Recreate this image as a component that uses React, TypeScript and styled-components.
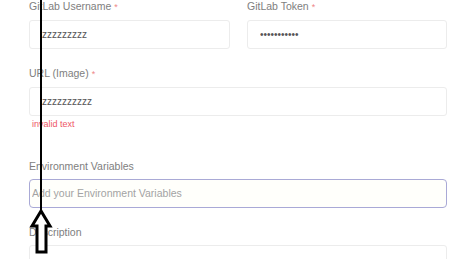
import React from "react";
import styled, { createGlobalStyle } from "styled-components";

const Global = createGlobalStyle`
  html, body { margin: 0; padding: 0; background: #ffffff; }
  body { font-family: "Liberation Sans", Arial, sans-serif; overflow: hidden; }
  * { box-sizing: border-box; }
`;

const Page = styled.div`
  position: relative;
  width: 474px;
  height: 259px;
  overflow: hidden;
  background: #fff;
`;

const Form = styled.form`
  display: flex;
  flex-direction: column;
  gap: 18px;
  padding: 0 27px 0 29px;
`;

const Row = styled.div`
  display: grid;
  grid-template-columns: 201px 200px;
  column-gap: 17px;
`;

const Field = styled.div<{ $extra?: number }>`
  display: flex;
  flex-direction: column;
  padding-bottom: ${(p) => p.$extra ?? 0}px;
`;

const Label = styled.label`
  font-size: 10.5px;
  line-height: 13px;
  color: #7e7e7e;
  margin-bottom: 6px;
  white-space: nowrap;
`;

const Req = styled.span`
  color: #e88;
  font-size: 9px;
  margin-left: 3px;
`;

const Input = styled.input<{ $focus?: boolean }>`
  height: 29px;
  width: 100%;
  border: 1px solid ${(p) => (p.$focus ? "#a9a9d6" : "#ececec")};
  border-radius: ${(p) => (p.$focus ? 4 : 3)}px;
  background: ${(p) => (p.$focus ? "#fffffb" : "#fff")};
  padding: 0 0 0 ${(p) => (p.$focus ? 2 : 12)}px;
  font-family: "Liberation Sans", Arial, sans-serif;
  font-size: 10px;
  color: #555;
  outline: none;
  &::placeholder { color: #a3a3a3; font-size: 10.5px; }
`;

const ErrorText = styled.div`
  font-size: 9px;
  line-height: 12px;
  color: #ee5566;
  margin-top: 2px;
  padding-left: 3px;
`;

const Overlay = styled.svg`
  position: absolute;
  left: 0;
  top: 0;
  pointer-events: none;
`;

export default function App() {
  return (
    <Page>
      <Global />
      <Form onSubmit={(e) => e.preventDefault()}>
        <Row>
          <Field>
            <Label>GitLab Username<Req>*</Req></Label>
            <Input defaultValue="zzzzzzzzz" />
          </Field>
          <Field>
            <Label>GitLab Token<Req>*</Req></Label>
            <Input type="password" defaultValue="aaaaaaaaaaa" />
          </Field>
        </Row>
        <Field $extra={12}>
          <Label>URL (Image)<Req>*</Req></Label>
          <Input defaultValue="zzzzzzzzzz" />
          <ErrorText>invalid text</ErrorText>
        </Field>
        <Field>
          <Label>Environment Variables</Label>
          <Input $focus placeholder="Add your Environment Variables" />
        </Field>
        <Field>
          <Label>Description</Label>
          <Input />
        </Field>
      </Form>
      <Overlay width="474" height="259" viewBox="0 0 474 259">
        <line x1="41" y1="0" x2="41" y2="212" stroke="#000" strokeWidth="2" />
        <polygon
          points="41,211 32,226 37,226 37,252 46,252 46,226 50,226"
          fill="#fff"
          stroke="#000"
          strokeWidth="3"
          strokeLinejoin="miter"
        />
      </Overlay>
    </Page>
  );
}
